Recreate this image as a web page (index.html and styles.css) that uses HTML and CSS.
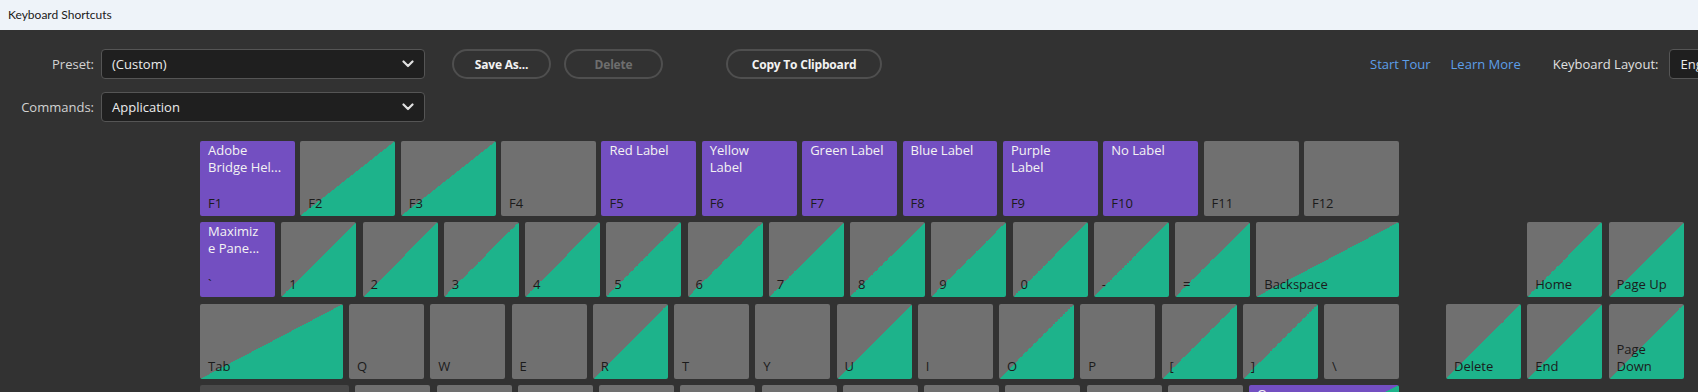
FILE: index.html
```html
<!DOCTYPE html>
<html>
<head>
    <title>Keyboard Shortcuts</title>
    <link rel="stylesheet" href="styles.css">
</head>
<body>
    <div class="titlebar">Keyboard Shortcuts</div>
    <div class="dialog">
        <div class="toolbar">
            <div class="field">
                <label class="fieldLabel">Preset:</label>
                <div class="select"><span>(Custom)</span>
                    <svg class="chev" width="12" height="8" viewBox="0 0 12 8"><polyline points="1.5,1.5 6,6 10.5,1.5" /></svg>
                </div>
            </div>
            <button class="pill first">Save As...</button>
            <button class="pill disabled">Delete</button>
            <button class="pill copy">Copy To Clipboard</button>
            <div class="links">
                <a class="link">Start Tour</a>
                <a class="link">Learn More</a>
            </div>
            <div class="layoutPick">
                <span class="layoutLabel">Keyboard Layout:</span>
                <div class="select small"><span>English</span></div>
            </div>
        </div>
        <div class="toolbar">
            <div class="field">
                <label class="fieldLabel">Commands:</label>
                <div class="select"><span>Application</span>
                    <svg class="chev" width="12" height="8" viewBox="0 0 12 8"><polyline points="1.5,1.5 6,6 10.5,1.5" /></svg>
                </div>
            </div>
        </div>

        <div class="keyboard">
            <div class="main">
                <div class="row frow">
                    <div class="key cmdkey"><span class="cmd">Adobe<br>Bridge Hel...</span><span class="name">F1</span></div>
                    <div class="key split"><span class="name">F2</span></div>
                    <div class="key split"><span class="name">F3</span></div>
                    <div class="key"><span class="name">F4</span></div>
                    <div class="key cmdkey"><span class="cmd">Red Label</span><span class="name">F5</span></div>
                    <div class="key cmdkey"><span class="cmd">Yellow<br>Label</span><span class="name">F6</span></div>
                    <div class="key cmdkey"><span class="cmd">Green Label</span><span class="name">F7</span></div>
                    <div class="key cmdkey"><span class="cmd">Blue Label</span><span class="name">F8</span></div>
                    <div class="key cmdkey"><span class="cmd">Purple<br>Label</span><span class="name">F9</span></div>
                    <div class="key cmdkey"><span class="cmd">No Label</span><span class="name">F10</span></div>
                    <div class="key"><span class="name">F11</span></div>
                    <div class="key"><span class="name">F12</span></div>
                </div>
                <div class="row">
                    <div class="key cmdkey"><span class="cmd">Maximiz<br>e Pane...</span><span class="name">`</span></div>
                    <div class="key split"><span class="name">1</span></div>
                    <div class="key split"><span class="name">2</span></div>
                    <div class="key split"><span class="name">3</span></div>
                    <div class="key split"><span class="name">4</span></div>
                    <div class="key split"><span class="name">5</span></div>
                    <div class="key split"><span class="name">6</span></div>
                    <div class="key split"><span class="name">7</span></div>
                    <div class="key split"><span class="name">8</span></div>
                    <div class="key split"><span class="name">9</span></div>
                    <div class="key split"><span class="name">0</span></div>
                    <div class="key split"><span class="name">-</span></div>
                    <div class="key split"><span class="name">=</span></div>
                    <div class="key split wide"><span class="name">Backspace</span></div>
                </div>
                <div class="row">
                    <div class="key split wide"><span class="name">Tab</span></div>
                    <div class="key"><span class="name">Q</span></div>
                    <div class="key"><span class="name">W</span></div>
                    <div class="key"><span class="name">E</span></div>
                    <div class="key split"><span class="name">R</span></div>
                    <div class="key"><span class="name">T</span></div>
                    <div class="key"><span class="name">Y</span></div>
                    <div class="key split"><span class="name">U</span></div>
                    <div class="key"><span class="name">I</span></div>
                    <div class="key split"><span class="name">O</span></div>
                    <div class="key"><span class="name">P</span></div>
                    <div class="key split"><span class="name">[</span></div>
                    <div class="key split"><span class="name">]</span></div>
                    <div class="key"><span class="name">\</span></div>
                </div>
                <div class="row lastrow">
                    <div class="key caps"></div>
                    <div class="key"></div>
                    <div class="key"></div>
                    <div class="key"></div>
                    <div class="key"></div>
                    <div class="key"></div>
                    <div class="key"></div>
                    <div class="key"></div>
                    <div class="key"></div>
                    <div class="key"></div>
                    <div class="key"></div>
                    <div class="key"></div>
                    <div class="key cmdkey split wide"><span class="cmd">Open</span></div>
                </div>
            </div>
            <div class="nav">
                <div class="key split home"><span class="name">Home</span></div>
                <div class="key split pgup"><span class="name">Page Up</span></div>
                <div class="key split del"><span class="name">Delete</span></div>
                <div class="key split end"><span class="name">End</span></div>
                <div class="key split pgdn"><span class="name">Page Down</span></div>
            </div>
        </div>
    </div>
</body>
</html>
```

FILE: styles.css
```css
body, html {
    margin: 0;
    padding: 0;
    height: 100%;
    overflow: hidden;
    background-color: #323232;
    font-family: "Open Sans", "Noto Sans", sans-serif;
}
.titlebar {
    height: 30px;
    line-height: 29px;
    padding-left: 8px;
    background-color: #eef3f9;
    color: #1a1a1a;
    font-family: "Lato", "Noto Sans", sans-serif;
    font-size: 12px;
}
.dialog {
    padding-top: 19px;
}
.toolbar {
    display: flex;
    align-items: center;
    height: 30px;
    margin-bottom: 13px;
    white-space: nowrap;
}
.toolbar > * {
    flex-shrink: 0;
}
.field {
    display: flex;
    align-items: center;
}
.fieldLabel {
    width: 94px;
    text-align: right;
    margin-right: 7px;
    color: #d2d2d2;
    font-size: 13px;
}
.select {
    box-sizing: border-box;
    width: 324px;
    height: 30px;
    display: flex;
    align-items: center;
    justify-content: space-between;
    padding: 0 10px 0 10px;
    background-color: #1f1f1f;
    border: 1px solid #555;
    border-radius: 4px;
    color: #ececec;
    font-size: 13px;
}
.select.small {
    width: 110px;
    flex-shrink: 0;
}
.chev polyline {
    fill: none;
    stroke: #e0e0e0;
    stroke-width: 2.2;
    stroke-linecap: round;
    stroke-linejoin: round;
}
.pill {
    box-sizing: border-box;
    width: 99px;
    height: 30px;
    margin-left: 13px;
    padding: 0;
    background: transparent;
    border: 2px solid #4f4f4f;
    border-radius: 15px;
    color: #f2f2f2;
    font-family: "Open Sans", sans-serif;
    font-weight: 700;
    font-size: 12px;
    letter-spacing: -0.2px;
}
.pill.first {
    margin-left: 27px;
}
.pill.disabled {
    color: #6e6e6e;
}
.pill.copy {
    width: 156px;
    margin-left: 63px;
}
.links {
    display: flex;
    gap: 20px;
    margin-left: 488px;
}
.link {
    color: #5d9fe9;
    font-size: 13px;
}
.layoutPick {
    display: flex;
    align-items: center;
    margin-left: 32px;
    gap: 11px;
}
.layoutLabel {
    color: #e0e0e0;
    font-size: 13px;
}

.keyboard {
    display: flex;
    padding-left: 200px;
    padding-top: 6px;
    gap: 47px;
}
.main {
    width: 1199px;
    flex-shrink: 0;
    display: flex;
    flex-direction: column;
    gap: 6.33px;
}
.row {
    display: flex;
    gap: 6.25px;
}
.frow {
    gap: 5.4px;
}
.frow .key {
    flex: 1;
}
.key {
    box-sizing: border-box;
    width: 75px;
    height: 75px;
    flex-shrink: 0;
    display: flex;
    flex-direction: column;
    justify-content: space-between;
    padding: 1px 6px 4px 8px;
    background-color: #707070;
    border-radius: 2px;
    font-size: 13px;
    line-height: 17px;
    color: #1b1b1b;
    overflow: hidden;
}
.key .name {
    margin-top: auto;
}
.key.wide {
    flex: 1;
}
.key.caps {
    width: 149px;
    background-color: #4a4a4a;
}
.key.split {
    background: linear-gradient(to bottom right, #707070 50%, #1db38b 50%);
}
.key.cmdkey {
    background-color: #734fc1;
}
.key.cmdkey.split {
    background: linear-gradient(to bottom right, #734fc1 50%, #1db38b 50%);
}
.cmd {
    color: #f3f3f3;
}
.nav {
    display: grid;
    grid-template-columns: repeat(3, 75px);
    grid-template-rows: repeat(3, 75px);
    gap: 6.33px 6.25px;
}
.nav .home { grid-row: 2; grid-column: 2; }
.nav .pgup { grid-row: 2; grid-column: 3; }
.nav .del { grid-row: 3; grid-column: 1; }
.nav .end { grid-row: 3; grid-column: 2; }
.nav .pgdn { grid-row: 3; grid-column: 3; }
```
